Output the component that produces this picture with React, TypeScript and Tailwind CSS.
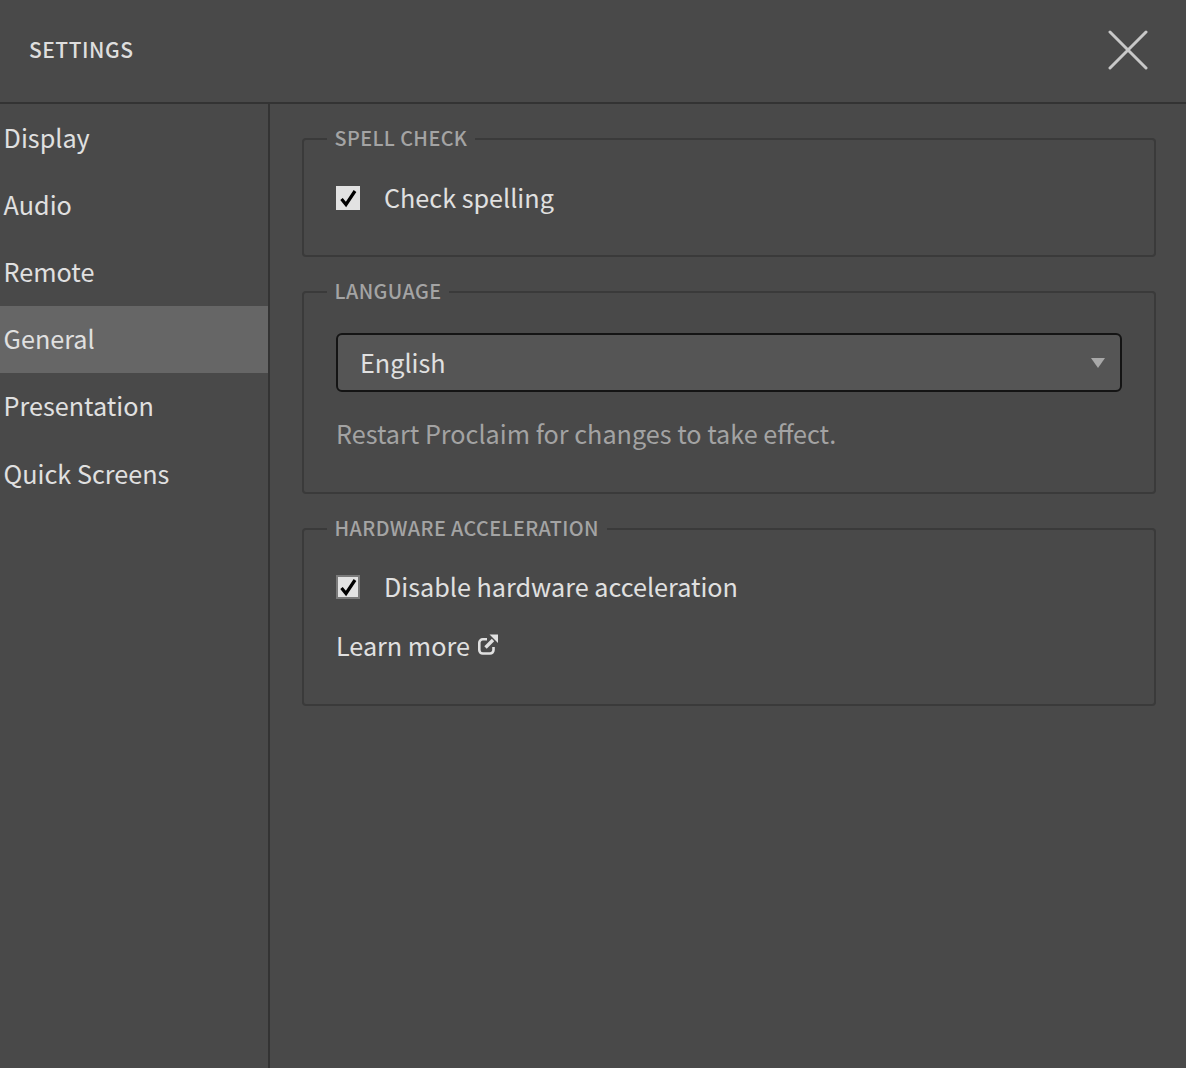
const navItems = ["Display", "Audio", "Remote", "General", "Presentation", "Quick Screens"]

function CheckBox({ outlined }: { outlined?: boolean }) {
  return (
    <span className={"mt-[2px] flex h-6 w-6 shrink-0 items-center justify-center bg-[#e2e2e2] " + (outlined ? "border-2 border-[#7a7a7a]" : "")}>
      <svg viewBox="0 0 24 24" className="h-6 w-6 shrink-0" fill="none" stroke="#000" strokeWidth="3.2">
        <path d="M5.5 13l4.5 5.5L19 5" />
      </svg>
    </span>
  )
}

function Group({ title, className, children }: { title: string; className: string; children: React.ReactNode }) {
  return (
    <fieldset className={"rounded border-2 border-[#3a3a3a] px-8 " + className}>
      <legend className="ml-[-9.5px] px-2 pb-[2px] text-[19.8px] leading-[22px] font-medium tracking-[0.4px] text-[#a4a4a4] uppercase">{title}</legend>
      {children}
    </fieldset>
  )
}

export default function App() {
  return (
    <div className="flex h-[1068px] w-[1186px] flex-col overflow-hidden bg-[#494949] text-[#e0e0e0] font-['Noto_Sans_CJK_SC','Noto_Sans',sans-serif]">
      <div className="flex h-[104px] shrink-0 items-center justify-between border-b-2 border-[#333333] pr-[38px] pb-[2px] pl-[29px]">
        <span className="mb-[2px] text-[21px] leading-[30px] font-medium tracking-[0.5px] text-[#dedede]">SETTINGS</span>
        <svg viewBox="0 0 40 40" className="h-10 w-10" stroke="#c8c8c8" strokeWidth="3" strokeLinecap="round">
          <path d="M2 2l36 36M38 2L2 38" />
        </svg>
      </div>
      <div className="flex min-h-0 flex-1">
        <div className="w-[270px] shrink-0 border-r-2 border-[#333333]">
          {navItems.map((item) => (
            <div
              key={item}
              className={"flex h-[67.2px] items-center pb-[2px] pl-[3.6px] text-[25.2px] leading-[36px] " + (item === "General" ? "bg-[#666666]" : "")}
            >
              {item}
            </div>
          ))}
        </div>
        <div className="flex flex-1 flex-col gap-[23px] pt-[23px] pr-[30px] pl-8">
          <Group title="Spell Check" className="h-[130px]">
            <label className="mt-[28px] flex items-center gap-6 text-[25.2px] leading-[36px]">
              <CheckBox />
              Check spelling
            </label>
          </Group>
          <Group title="Language" className="h-[214px]">
            <div className="mt-[29px] flex h-[59px] items-center justify-between rounded-md border-2 border-[#141414] bg-[#555555] pr-[15px] pl-[22px] text-[25.2px] leading-[36px]">
              <span className="mb-[2px]">English</span>
              <span className="h-0 w-0 border-x-[7px] border-t-[10px] border-x-transparent border-t-[#a8a8a8]" />
            </div>
            <p className="mt-[23px] text-[25.2px] leading-[36px] text-[#a3a3a3]">Restart Proclaim for changes to take effect.</p>
          </Group>
          <Group title="Hardware Acceleration" className="h-[189px]">
            <label className="mt-[27px] flex items-center gap-6 text-[25.2px] leading-[36px]">
              <CheckBox outlined />
              Disable hardware acceleration
            </label>
            <a className="mt-[23px] flex items-center gap-2 text-[25.2px] leading-[36px]">
              Learn more
              <svg viewBox="0 0 20 21" className="mb-[1px] h-[21px] w-5" fill="none" stroke="#e0e0e0" strokeWidth="2.6">
                <path d="M15.5 13v3a3.5 3.5 0 0 1-3.5 3.5H4.8A3.5 3.5 0 0 1 1.3 16V8.8a3.5 3.5 0 0 1 3.5-3.5H9" />
                <path d="M7.5 13.5L15 6" strokeWidth="3.4" />
                <path d="M11.5 0.5H20V9z" fill="#e0e0e0" stroke="none" />
              </svg>
            </a>
          </Group>
        </div>
      </div>
    </div>
  )
}
